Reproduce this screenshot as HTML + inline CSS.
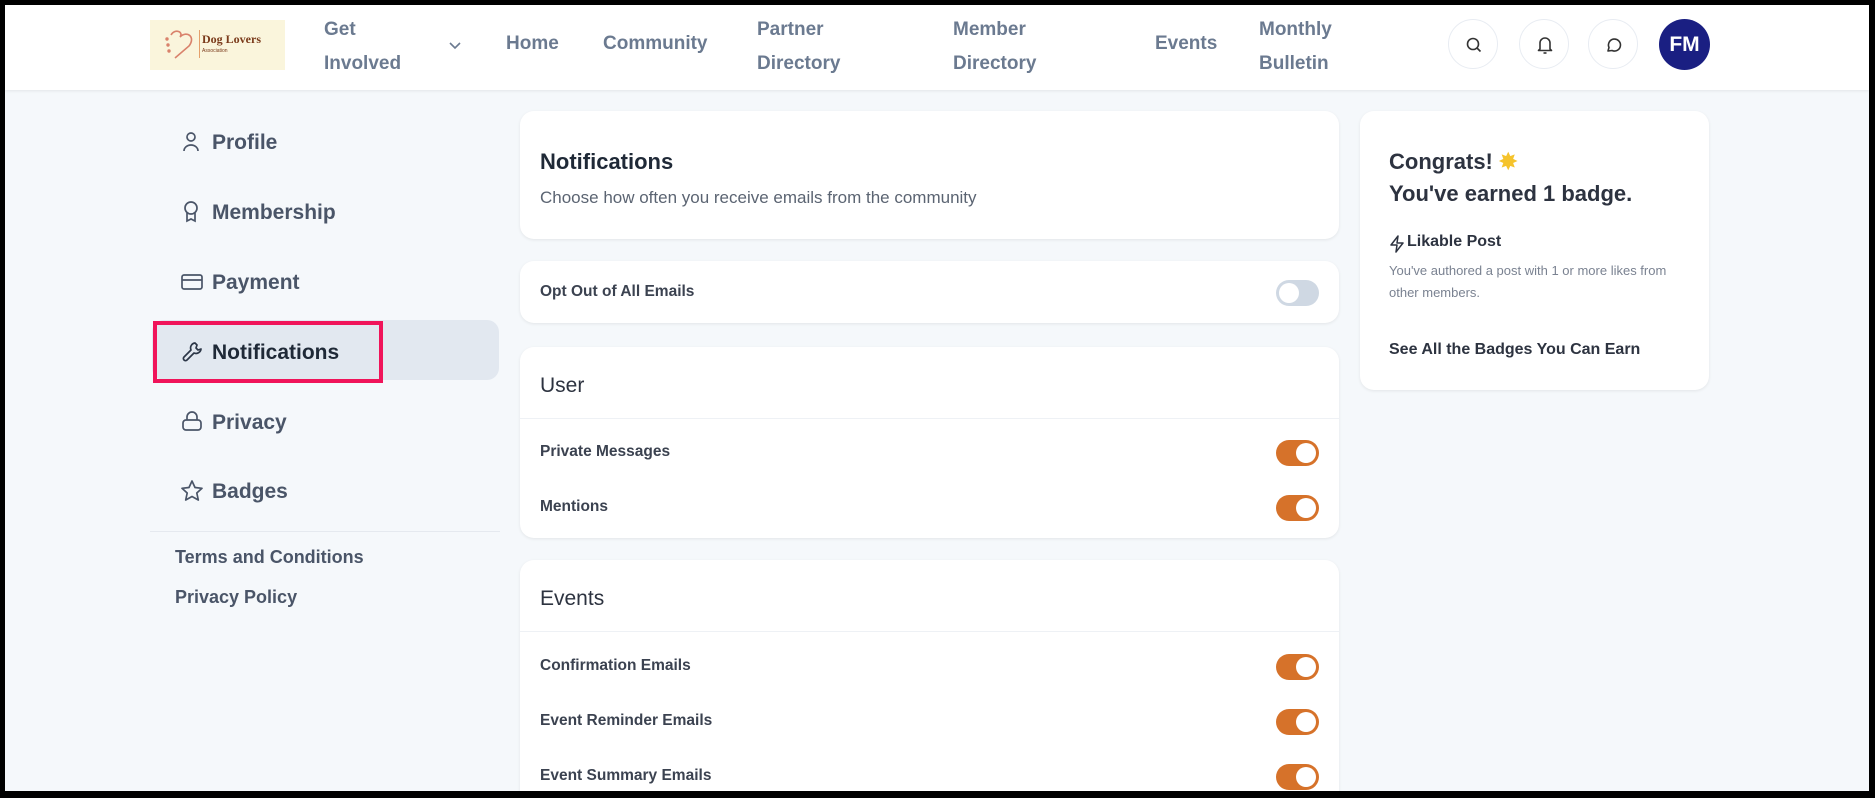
<!DOCTYPE html>
<html><head><meta charset="utf-8"><style>
*{box-sizing:border-box;margin:0;padding:0}
body{width:1875px;height:798px;background:#000;font-family:"Liberation Sans",sans-serif;overflow:hidden;position:relative}
.frame{position:absolute;left:5px;top:5px;width:1864px;height:786px;background:#f5f8fb;overflow:hidden}
.hdr{position:absolute;left:0;top:0;width:100%;height:85px;background:#fff;box-shadow:0 1px 3px rgba(0,0,0,.08)}
.a{position:absolute}
.nav{color:#6b7a90;font-size:19px;line-height:34px;font-weight:600}
.circ{position:absolute;width:50px;height:50px;border-radius:50%;border:1px solid #e8ecf2;background:#fff}
.side{color:#4a5568;font-size:21px;font-weight:600}
.card{position:absolute;left:515px;width:819px;background:#fff;border-radius:14px;box-shadow:0 1px 3px rgba(0,0,0,.08)}
.lbl{position:absolute;left:20px;font-size:15.5px;font-weight:700;color:#3b4250}
.tg{position:absolute;left:756px;width:43px;height:26px;border-radius:13px;background:#d6722a}
.tg::after{content:"";position:absolute;right:3px;top:3px;width:20px;height:20px;border-radius:50%;background:#fff}
.tg.off{background:#cfd8e3}
.tg.off::after{left:3px;right:auto}
.hl{position:absolute;left:0;width:100%;height:1px;background:#eef1f5}
</style></head><body><div class="frame">
<div class="hdr">
 <div class="a" style="left:145px;top:15px;width:135px;height:50px;background:#faf5dc">
  <svg class="a" style="left:12px;top:8px" width="36" height="34" viewBox="0 0 36 34"><path d="M9 7 C13 0 22 4 18 9 C25 2 34 9 27 18 L13 30" fill="none" stroke="#d9826b" stroke-width="1.6"/><circle cx="5" cy="11" r="1.7" fill="#d9826b"/><circle cx="6" cy="17" r="1.7" fill="#d9826b"/><circle cx="7" cy="23" r="1.7" fill="#d9826b"/></svg>
  <div class="a" style="left:49px;top:10px;height:28px;border-left:1px solid #e5a06b"></div>
  <div class="a" style="left:52px;top:12px;font-family:'Liberation Serif',serif;font-weight:700;font-size:12px;color:#7a3a1a">Dog Lovers</div>
  <div class="a" style="left:52px;top:28px;font-size:5px;color:#7a3a1a">Association</div>
 </div>
 <div class="a nav" style="left:319px;top:8px">Get<br>Involved</div>
 <svg class="a" style="left:443px;top:36px" width="14" height="10" viewBox="0 0 14 10"><path d="M2 2l5 5 5-5" fill="none" stroke="#6b7a90" stroke-width="1.6"/></svg>
 <div class="a nav" style="left:501px;top:22px">Home</div>
 <div class="a nav" style="left:598px;top:22px">Community</div>
 <div class="a nav" style="left:752px;top:8px">Partner<br>Directory</div>
 <div class="a nav" style="left:948px;top:8px">Member<br>Directory</div>
 <div class="a nav" style="left:1150px;top:22px">Events</div>
 <div class="a nav" style="left:1254px;top:8px">Monthly<br>Bulletin</div>
 <div class="circ" style="left:1443px;top:14px"><svg class="a" style="left:15px;top:15px" width="20" height="20" viewBox="0 0 20 20"><circle cx="9" cy="9" r="5.5" fill="none" stroke="#333" stroke-width="1.6"/><path d="M13 13l3.5 3.5" stroke="#333" stroke-width="1.6"/></svg></div>
 <div class="circ" style="left:1514px;top:14px"><svg class="a" style="left:15px;top:14px" width="20" height="22" viewBox="0 0 20 22"><path d="M5 15V9a5 5 0 0110 0v6l1.5 1.5h-13z" fill="none" stroke="#333" stroke-width="1.6" stroke-linejoin="round"/><path d="M8.5 19h3" stroke="#333" stroke-width="1.6"/></svg></div>
 <div class="circ" style="left:1583px;top:14px"><svg class="a" style="left:15px;top:15px" width="20" height="20" viewBox="0 0 20 20"><path d="M4 16l1-3.5A6 6 0 1 1 8 15.5z" fill="none" stroke="#333" stroke-width="1.6" stroke-linejoin="round"/></svg></div>
 <div class="a" style="left:1654px;top:14px;width:51px;height:51px;border-radius:50%;background:#1a1f82;color:#fff;font-size:21px;line-height:51px;text-align:center;font-weight:600">FM</div>
</div>

<div class="a" style="left:147px;top:315px;width:347px;height:60px;border-radius:12px;background:#e2e8f0"></div>
<div class="a" style="left:148px;top:316px;width:230px;height:62px;border:4px solid #f0145a"></div>
<svg class="a" style="left:176px;top:126px" width="20" height="22" viewBox="0 0 20 22"><circle cx="10" cy="6" r="4" fill="none" stroke="#4a5568" stroke-width="1.7"/><path d="M3 20a7 6 0 0114 0" fill="none" stroke="#4a5568" stroke-width="1.7"/></svg>
<div class="a side" style="left:207px;top:126px">Profile</div>
<svg class="a" style="left:176px;top:195px" width="20" height="24" viewBox="0 0 20 24"><circle cx="10" cy="8" r="6" fill="none" stroke="#4a5568" stroke-width="1.7"/><path d="M6 13v8l4-2 4 2v-8" fill="none" stroke="#4a5568" stroke-width="1.7"/></svg>
<div class="a side" style="left:207px;top:196px">Membership</div>
<svg class="a" style="left:175px;top:267px" width="24" height="20" viewBox="0 0 24 20"><rect x="2" y="3" width="20" height="14" rx="2" fill="none" stroke="#4a5568" stroke-width="1.7"/><path d="M2 8h20" stroke="#4a5568" stroke-width="1.7"/></svg>
<div class="a side" style="left:207px;top:266px">Payment</div>
<svg class="a" style="left:176px;top:335px" width="22" height="22" viewBox="0 0 22 22"><path d="M14 3a5 5 0 00-4 7L3 17a2 2 0 003 3l7-7a5 5 0 007-4l-3 1-2-2 1-3z" fill="none" stroke="#2d3748" stroke-width="1.7" stroke-linejoin="round"/></svg>
<div class="a side" style="left:207px;top:336px;color:#1f2937">Notifications</div>
<svg class="a" style="left:176px;top:405px" width="22" height="22" viewBox="0 0 22 22"><rect x="2" y="10" width="18" height="10" rx="3" fill="none" stroke="#4a5568" stroke-width="1.7"/><path d="M6 10V7a5 5 0 0110 0v3" fill="none" stroke="#4a5568" stroke-width="1.7"/></svg>
<div class="a side" style="left:207px;top:406px">Privacy</div>
<svg class="a" style="left:175px;top:474px" width="24" height="22" viewBox="0 0 24 22"><path d="M12 2l3 6.5 7 .8-5.2 4.7 1.5 7L12 17.5 5.7 21l1.5-7L2 9.3l7-.8z" fill="none" stroke="#4a5568" stroke-width="1.7" stroke-linejoin="round"/></svg>
<div class="a side" style="left:207px;top:475px">Badges</div>
<div class="a" style="left:145px;top:526px;width:350px;height:1px;background:#e5e9ef"></div>
<div class="a" style="left:170px;top:542px;font-size:18px;font-weight:600;color:#4a5568">Terms and Conditions</div>
<div class="a" style="left:170px;top:582px;font-size:18px;font-weight:600;color:#4a5568">Privacy Policy</div>

<div class="card" style="top:106px;height:128px">
 <div class="a" style="left:20px;top:38px;font-size:22px;font-weight:600;color:#1f2937">Notifications</div>
 <div class="a" style="left:20px;top:77px;font-size:17px;color:#5b6472">Choose how often you receive emails from the community</div>
</div>
<div class="card" style="top:256px;height:62px">
 <div class="lbl" style="top:22px">Opt Out of All Emails</div>
 <div class="tg off" style="top:19px"></div>
</div>
<div class="card" style="top:342px;height:191px">
 <div class="a" style="left:20px;top:27px;font-size:21px;color:#2d3340">User</div>
 <div class="hl" style="top:71px"></div>
 <div class="lbl" style="top:96px">Private Messages</div>
 <div class="tg" style="top:93px"></div>
 <div class="lbl" style="top:151px">Mentions</div>
 <div class="tg" style="top:148px"></div>
</div>
<div class="card" style="top:555px;height:260px">
 <div class="a" style="left:20px;top:27px;font-size:21px;color:#2d3340">Events</div>
 <div class="hl" style="top:71px"></div>
 <div class="lbl" style="top:97px">Confirmation Emails</div>
 <div class="tg" style="top:94px"></div>
 <div class="lbl" style="top:152px">Event Reminder Emails</div>
 <div class="tg" style="top:149px"></div>
 <div class="lbl" style="top:207px">Event Summary Emails</div>
 <div class="tg" style="top:204px"></div>
</div>

<div class="a" style="left:1355px;top:106px;width:349px;height:279px;background:#fff;border-radius:14px;box-shadow:0 1px 3px rgba(0,0,0,.08)">
 <div class="a" style="left:29px;top:35px;font-size:22px;font-weight:700;color:#2d3340;line-height:32px">Congrats! <span style="color:#f5c32c">✸</span><br>You've earned 1 badge.</div>
 <svg class="a" style="left:29px;top:124px" width="16" height="18" viewBox="0 0 16 18"><path d="M9 1L2 10h6l-1 7 7-9H8z" fill="none" stroke="#2d3340" stroke-width="1.5" stroke-linejoin="round"/></svg>
 <div class="a" style="left:47px;top:122px;font-size:16px;font-weight:700;color:#2d3340">Likable Post</div>
 <div class="a" style="left:29px;top:149px;font-size:13px;color:#7a8291;line-height:22px;width:280px">You've authored a post with 1 or more likes from other members.</div>
 <div class="a" style="left:29px;top:230px;font-size:16px;font-weight:700;color:#2d3340">See All the Badges You Can Earn</div>
</div>
</div></body></html>
